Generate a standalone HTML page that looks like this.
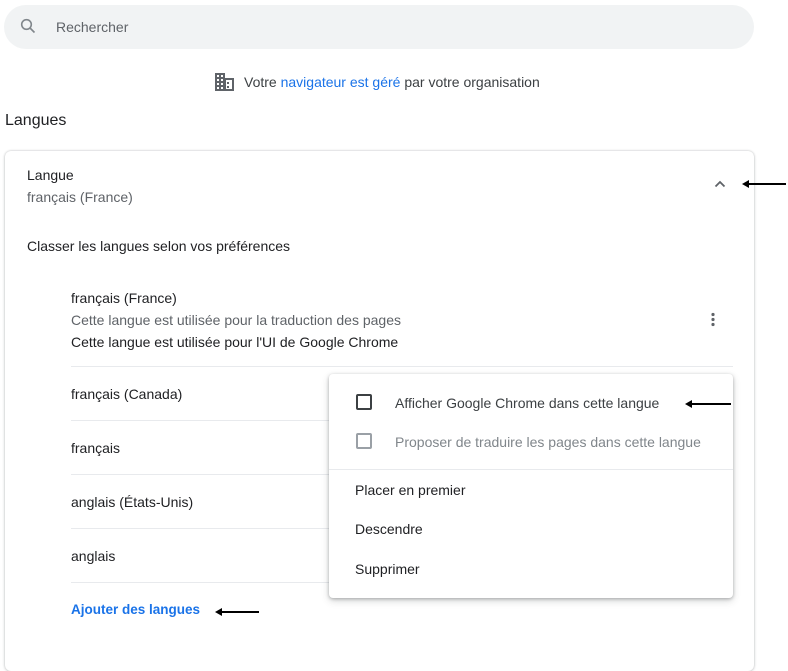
<!DOCTYPE html>
<html><head><meta charset="utf-8"><style>
*{margin:0;padding:0;box-sizing:border-box}
body{width:788px;height:648px;background:#fff;font-family:"Liberation Sans",Arial,sans-serif;font-size:14px;color:#202124;position:relative;overflow:hidden}
.a{position:absolute;white-space:nowrap;line-height:16px}
.g{color:#5f6368}
.div{position:absolute;left:71px;width:662px;height:1px;background:#e8eaed}
.arrow{position:absolute;height:2px;background:#000}
.arrow:before{content:"";position:absolute;left:-2px;top:-3px;border-right:7px solid #000;border-top:4px solid transparent;border-bottom:4px solid transparent}
.cb{position:absolute;width:16px;height:16px;border:2px solid #5f6368;border-radius:2px}
</style></head><body>
<div style="position:absolute;left:4px;top:5px;width:750px;height:44px;border-radius:22px;background:#f1f3f4"></div>
<svg style="position:absolute;left:19px;top:17px" width="20" height="20" viewBox="0 0 20 20"><circle cx="7.5" cy="7.5" r="4.8" fill="none" stroke="#80868b" stroke-width="1.6"/><path d="M11 11l4.5 4.5" stroke="#80868b" stroke-width="1.6"/></svg>
<div class="a g" style="left:56px;top:19px;font-size:14px">Rechercher</div>
<svg style="position:absolute;left:215px;top:73px" width="19" height="18" viewBox="0 0 19 18"><rect x="0" y="0" width="10" height="18" fill="#5f6368"/><rect x="10" y="5" width="9" height="13" fill="#5f6368"/><g fill="#fff"><rect x="2" y="2" width="2" height="2"/><rect x="6" y="2" width="2" height="2"/><rect x="2" y="6" width="2" height="2"/><rect x="6" y="6" width="2" height="2"/><rect x="2" y="10" width="2" height="2"/><rect x="6" y="10" width="2" height="2"/><rect x="2" y="14" width="2" height="2"/><rect x="6" y="14" width="2" height="2"/><rect x="11" y="7" width="6" height="9"/></g><rect x="12" y="9" width="2" height="2" fill="#5f6368"/><rect x="12" y="13" width="2" height="2" fill="#5f6368"/></svg>
<div class="a" style="left:244px;top:74px;color:#3c4043">Votre <span style="color:#1a73e8">navigateur est géré</span> par votre organisation</div>
<div class="a" style="left:5px;top:113px;font-size:16px">Langues</div>
<div style="position:absolute;left:5px;top:151px;width:749px;height:520px;border-radius:6px;box-shadow:0 0 2px rgba(60,64,67,.3),0 1px 3px rgba(60,64,67,.15)"></div>
<div class="a" style="left:27px;top:167px">Langue</div>
<div class="a g" style="left:27px;top:189px">français (France)</div>
<svg style="position:absolute;left:714px;top:180px" width="12" height="8" viewBox="0 0 12 8"><path d="M1.5 6.5L6 2l4.5 4.5" fill="none" stroke="#5f6368" stroke-width="1.8"/></svg>
<div class="arrow" style="left:744px;top:183px;width:42px"></div>
<div class="a" style="left:27px;top:238px">Classer les langues selon vos préférences</div>
<div class="a" style="left:71px;top:290px">français (France)</div>
<div class="a g" style="left:71px;top:312px">Cette langue est utilisée pour la traduction des pages</div>
<div class="a" style="left:71px;top:334px">Cette langue est utilisée pour l'UI de Google Chrome</div>
<svg style="position:absolute;left:710px;top:312px" width="6" height="16" viewBox="0 0 6 16"><circle cx="3" cy="2.5" r="1.6" fill="#5f6368"/><circle cx="3" cy="7.5" r="1.6" fill="#5f6368"/><circle cx="3" cy="12.5" r="1.6" fill="#5f6368"/></svg>
<div class="div" style="top:366px"></div>
<div class="a" style="left:71px;top:386px">français (Canada)</div>
<div class="div" style="top:420px"></div>
<div class="a" style="left:71px;top:440px">français</div>
<div class="div" style="top:474px"></div>
<div class="a" style="left:71px;top:494px">anglais (États-Unis)</div>
<div class="div" style="top:528px"></div>
<div class="a" style="left:71px;top:548px">anglais</div>
<div class="div" style="top:582px"></div>
<div class="a" style="left:71px;top:602px;color:#1a73e8;font-weight:bold;font-size:13.5px">Ajouter des langues</div>
<div class="arrow" style="left:217px;top:611px;width:42px"></div>
<div style="position:absolute;left:329px;top:374px;width:404px;height:224px;background:#fff;border-radius:4px;box-shadow:0 1px 3px rgba(60,64,67,.35),0 3px 8px rgba(60,64,67,.2)"></div>
<div class="cb" style="left:356px;top:394px;border-color:#3c4043"></div>
<div class="a" style="left:395px;top:395px;color:#3c4043">Afficher Google Chrome dans cette langue</div>
<div class="arrow" style="left:687px;top:403px;width:44px"></div>
<div class="cb" style="left:356px;top:433px;border-color:#9aa0a6"></div>
<div class="a" style="left:395px;top:434px;color:#80868b">Proposer de traduire les pages dans cette langue</div>
<div style="position:absolute;left:329px;top:469px;width:404px;height:1px;background:#e8eaed"></div>
<div class="a" style="left:355px;top:482px">Placer en premier</div>
<div class="a" style="left:355px;top:521px">Descendre</div>
<div class="a" style="left:355px;top:561px">Supprimer</div>
</body></html>
